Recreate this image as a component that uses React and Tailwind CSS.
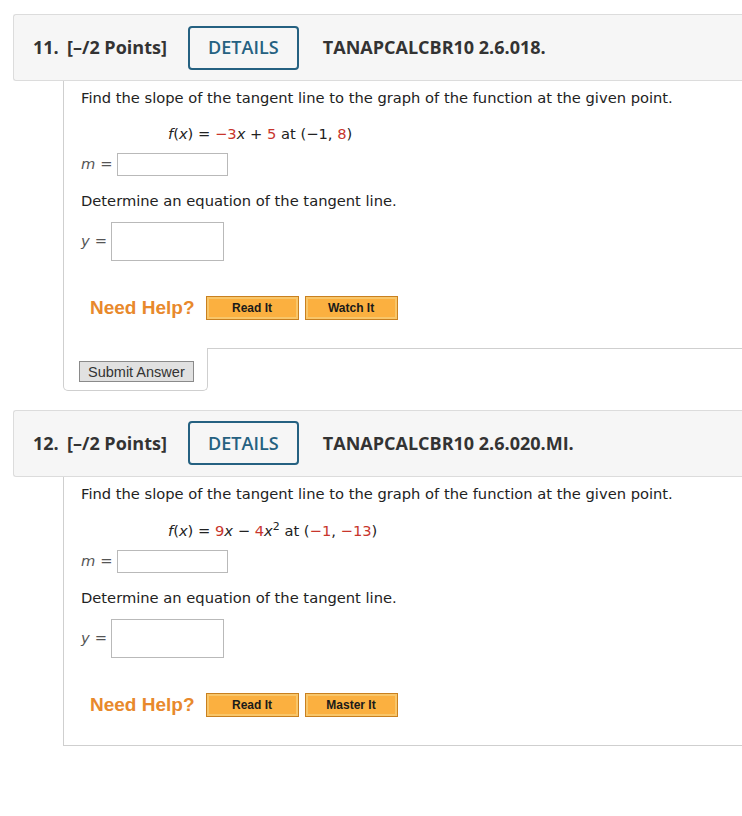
import React from 'react';

const red = 'text-[#c8352c]';

const HelpButton = ({ label }) => (
  <button className="h-[24px] w-[93px] border border-[#c9801f] bg-[#fbb040] shadow-[inset_0_0_0_2px_#f8c66a] text-[12px] font-bold text-[#1a1a1a] font-['Liberation_Sans',Arial,sans-serif] leading-none">
    {label}
  </button>
);

const Header = ({ num, code }) => (
  <div className="ml-[13px] h-[67px] border border-r-0 border-[#dcdcdc] bg-[#f6f6f6] rounded-l-[3px] flex items-center font-['Open_Sans',sans-serif] font-bold text-[18px] text-[#333]">
    <span className="ml-[19px] w-[34px]">{num}.</span>
    <span>[–/2 Points]</span>
    <div className="ml-[21px] w-[111px] h-[44px] border-2 border-[#256181] rounded-[4px] flex items-center justify-center text-[#256181] font-semibold">
      DETAILS
    </div>
    <span className="ml-[24px]">{code}</span>
  </div>
);

const Field = ({ label, w, h }) => (
  <div className="flex items-center">
    <span className="italic text-[#555]">{label}</span>
    <span className="ml-[5px] text-[#555]">=</span>
    <div className={`ml-[4px] border border-[#b9b9b9] bg-white ${w} ${h}`} />
  </div>
);

const Body = ({ fx, last, helpLabel }) => (
  <div className="pl-[17px] pt-[7px] font-['DejaVu_Sans',Verdana,sans-serif] text-[14.7px] text-[#222]">
    <p className="leading-[20px]">Find the slope of the tangent line to the graph of the function at the given point.</p>
    <div className={`${last ? 'mt-[17px]' : 'mt-[16px]'} ml-[87px] leading-[20px]`}>{fx}</div>
    <div className="mt-[9px]">
      <Field label="m" w="w-[111px]" h="h-[23px]" />
    </div>
    <p className="mt-[15px] leading-[20px]">Determine an equation of the tangent line.</p>
    <div className="mt-[11px]">
      <Field label="y" w="w-[113px]" h="h-[39px]" />
    </div>
    <div className="mt-[33px] ml-[9px] flex items-center">
      <span className="font-['Liberation_Sans',Arial,sans-serif] font-bold text-[19px] text-[#e8892c]">Need Help?</span>
      <div className="ml-[11px] flex gap-[6px]">
        <HelpButton label="Read It" />
        <HelpButton label={helpLabel} />
      </div>
    </div>
    <div className={last ? 'h-[26px]' : 'h-[25px]'} />
  </div>
);

export default function App() {
  return (
    <div className="w-[742px] h-[816px] bg-white overflow-hidden pt-[14px]">
      <Header num="11" code="TANAPCALCBR10 2.6.018." />
      <div className="ml-[63px] border-l border-[#cfcfcf]">
        <Body
          helpLabel="Watch It"
          fx={
            <>
              <span className="italic">f</span>(<span className="italic">x</span>) = <span className={red}>−3</span><span className="italic">x</span> + <span className={red}>5</span> at (−1, <span className={red}>8</span>)
            </>
          }
        />
      </div>
      <div className="ml-[63px] flex">
        <div className="w-[145px] h-[43px] border border-t-0 border-[#cfcfcf] rounded-b-[5px] pl-[15px] pt-[11px]">
          <button className="h-[21px] px-[8px] bg-[#e1e1e1] border border-[#8a8a8a] text-[14.5px] leading-none text-[#333] font-['Liberation_Sans',Arial,sans-serif]">
            Submit Answer
          </button>
        </div>
        <div className="flex-1 border-t border-[#cfcfcf]" />
      </div>

      <div className="mt-[19px]">
        <Header num="12" code="TANAPCALCBR10 2.6.020.MI." />
        <div className="ml-[63px] border-l border-b border-[#cfcfcf]">
          <Body
            last
            helpLabel="Master It"
            fx={
              <>
                <span className="italic">f</span>(<span className="italic">x</span>) = <span className={red}>9</span><span className="italic">x</span> − <span className={red}>4</span><span className="italic">x</span><sup className="text-[11px]">2</sup> at (<span className={red}>−1</span>, <span className={red}>−13</span>)
              </>
            }
          />
        </div>
      </div>
    </div>
  );
}
